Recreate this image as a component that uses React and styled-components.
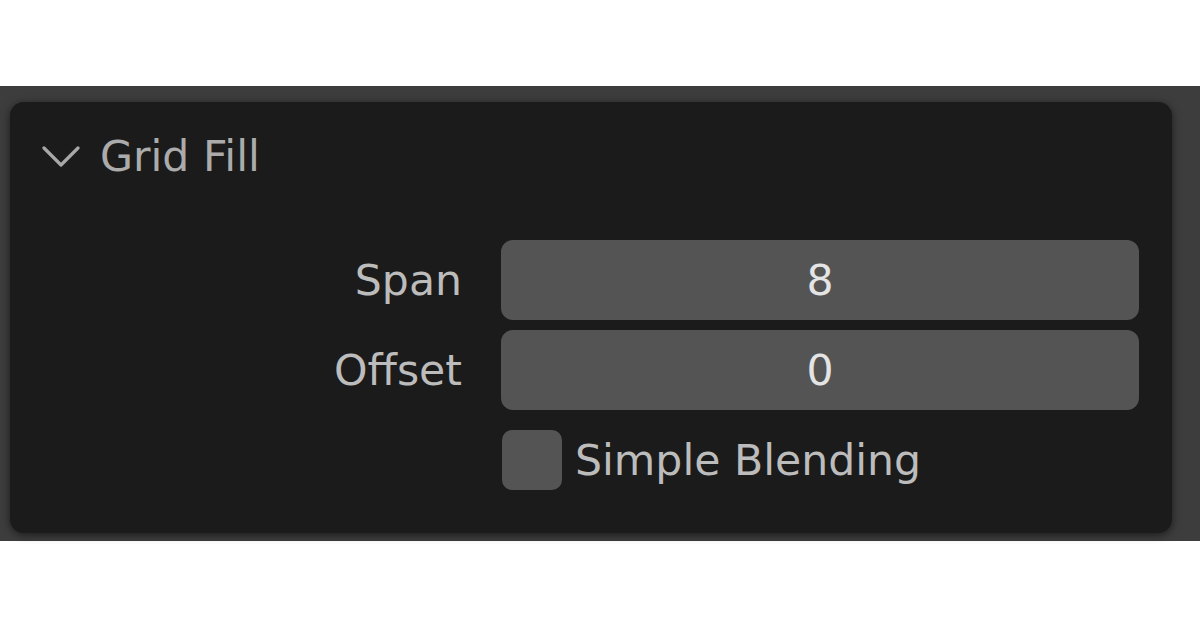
import React from 'react'
import styled, {createGlobalStyle} from 'styled-components'

const Global = createGlobalStyle`
  html, body {
    margin: 0;
    padding: 0;
    background: #ffffff;
  }
  body {
    font-family: "DejaVu Sans", Inter, sans-serif;
  }
`

const Page = styled.div`
  width: 1200px;
  height: 628px;
  padding-top: 86px;
  box-sizing: border-box;
`

const Region = styled.div`
  height: 455px;
  background: #3d3d3d;
  padding: 16px 28px 8px 10px;
  box-sizing: border-box;
`

const Panel = styled.div`
  height: 431px;
  background: #1b1b1b;
  border-radius: 14px;
  box-shadow: 0 2px 8px rgba(0, 0, 0, 0.55);
  padding: 26px 33px 0 0;
  box-sizing: border-box;
`

const Header = styled.div`
  display: flex;
  align-items: center;
  height: 56px;
  padding-left: 32px;
  gap: 20px;
  color: #ababab;
  font-size: 42.6px;
`

const Body = styled.div`
  display: flex;
  flex-direction: column;
  gap: 10px;
  margin-top: 56px;
`

const Row = styled.div`
  display: flex;
  align-items: center;
  height: ${p => p.h || 80}px;
  margin-top: ${p => p.mt || 0}px;
  gap: 39px;
`

const Label = styled.div`
  width: 452px;
  text-align: right;
  color: #bcbcbc;
  font-size: 42.6px;
`

const Field = styled.div`
  flex: 1;
  height: 100%;
  background: #545454;
  border-radius: 12px;
  display: flex;
  align-items: center;
  justify-content: center;
  color: #e4e4e4;
  font-size: 42.6px;
`

const Check = styled.div`
  display: flex;
  align-items: center;
  gap: 13px;
  margin-left: 1px;
  color: #bcbcbc;
  font-size: 42.6px;
`

const Box = styled.div`
  width: 60px;
  height: 60px;
  border-radius: 10px;
  background: #545454;
`

const Chevron = () => (
    <svg width="38" height="24" viewBox="0 0 38 24">
        <polyline points="2,4 19,21 36,4" fill="none" stroke="#a8a8a8" strokeWidth="3.2" strokeLinecap="round" strokeLinejoin="round"/>
    </svg>
)

export default function App() {
    return (
        <Page>
            <Global/>
            <Region>
                <Panel>
                    <Header>
                        <Chevron/>
                        <span>Grid Fill</span>
                    </Header>
                    <Body>
                        <Row>
                            <Label>Span</Label>
                            <Field>8</Field>
                        </Row>
                        <Row>
                            <Label>Offset</Label>
                            <Field>0</Field>
                        </Row>
                        <Row h={60} mt={10}>
                            <Label/>
                            <Check>
                                <Box/>
                                <span>Simple Blending</span>
                            </Check>
                        </Row>
                    </Body>
                </Panel>
            </Region>
        </Page>
    )
}
